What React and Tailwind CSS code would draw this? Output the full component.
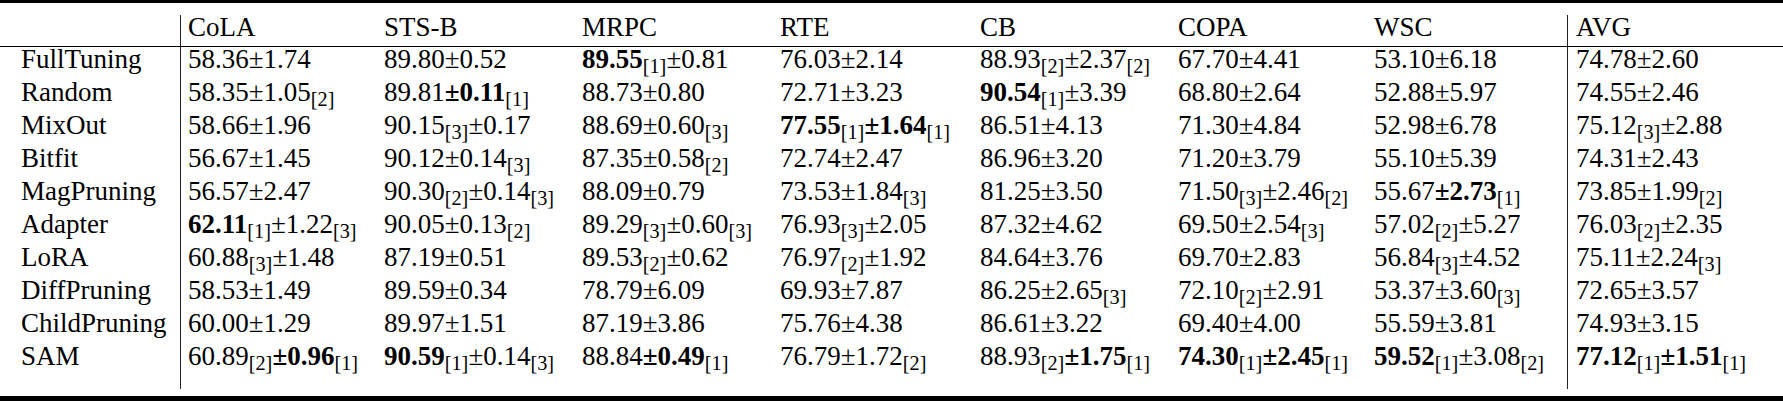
import React from 'react';

// columns: label | CoLA | STS-B | MRPC | RTE | CB | COPA | WSC | AVG
const cols = 'grid grid-cols-[181px_196px_198px_198px_200px_198px_196px_201px_1fr]';

const heads = ['CoLA', 'STS-B', 'MRPC', 'RTE', 'CB', 'COPA', 'WSC', 'AVG'];

// "*" = bold, "[n]" = rank subscript
const rows = [
    ['FullTuning', '58.36±1.74', '89.80±0.52', '*89.55[1]±0.81', '76.03±2.14', '88.93[2]±2.37[2]', '67.70±4.41', '53.10±6.18', '74.78±2.60'],
    ['Random', '58.35±1.05[2]', '89.81±*0.11[1]', '88.73±0.80', '72.71±3.23', '*90.54[1]±3.39', '68.80±2.64', '52.88±5.97', '74.55±2.46'],
    ['MixOut', '58.66±1.96', '90.15[3]±0.17', '88.69±0.60[3]', '*77.55[1]±*1.64[1]', '86.51±4.13', '71.30±4.84', '52.98±6.78', '75.12[3]±2.88'],
    ['Bitfit', '56.67±1.45', '90.12±0.14[3]', '87.35±0.58[2]', '72.74±2.47', '86.96±3.20', '71.20±3.79', '55.10±5.39', '74.31±2.43'],
    ['MagPruning', '56.57±2.47', '90.30[2]±0.14[3]', '88.09±0.79', '73.53±1.84[3]', '81.25±3.50', '71.50[3]±2.46[2]', '55.67±*2.73[1]', '73.85±1.99[2]'],
    ['Adapter', '*62.11[1]±1.22[3]', '90.05±0.13[2]', '89.29[3]±0.60[3]', '76.93[3]±2.05', '87.32±4.62', '69.50±2.54[3]', '57.02[2]±5.27', '76.03[2]±2.35'],
    ['LoRA', '60.88[3]±1.48', '87.19±0.51', '89.53[2]±0.62', '76.97[2]±1.92', '84.64±3.76', '69.70±2.83', '56.84[3]±4.52', '75.11±2.24[3]'],
    ['DiffPruning', '58.53±1.49', '89.59±0.34', '78.79±6.09', '69.93±7.87', '86.25±2.65[3]', '72.10[2]±2.91', '53.37±3.60[3]', '72.65±3.57'],
    ['ChildPruning', '60.00±1.29', '89.97±1.51', '87.19±3.86', '75.76±4.38', '86.61±3.22', '69.40±4.00', '55.59±3.81', '74.93±3.15'],
    ['SAM', '60.89[2]±*0.96[1]', '*90.59[1]±0.14[3]', '88.84±*0.49[1]', '76.79±1.72[2]', '88.93[2]±*1.75[1]', '*74.30[1]±*2.45[1]', '*59.52[1]±3.08[2]', '*77.12[1]±*1.51[1]'],
];

const Part = ({ text }) => {
    const bold = text.startsWith('*');
    const body = bold ? text.slice(1) : text;
    const m = body.match(/^(.*?)(\[\d\])?$/);
    return (
        <>
            <span className={bold ? 'font-bold' : ''}>{m[1]}</span>
            {m[2] && <sub className="font-normal">{m[2]}</sub>}
        </>
    );
};

const Value = ({ text }) => {
    const [mean, std] = text.split('±');
    const stdBold = std.startsWith('*');
    return (
        <>
            <Part text={mean} />
            <span className={stdBold ? 'font-bold' : ''}>±</span>
            <Part text={std} />
        </>
    );
};

const Cell = ({ i, children }) => {
    let cls = 'pl-[7px] whitespace-nowrap';
    if (i === 0) cls = 'pl-[21px] border-r border-[#222] whitespace-nowrap';
    if (i === 7) cls = 'pl-[7px] border-r border-[#222] whitespace-nowrap';
    if (i === 8) cls = 'pl-[8px] whitespace-nowrap';
    return <div className={cls}>{children}</div>;
};

const App = () => {
    return (
        <div className="w-[1783px] h-[401px] bg-white text-black font-['Liberation_Serif','Times_New_Roman',serif] text-[27px] leading-[25px] overflow-hidden">
            <div className="h-[3px] bg-black" />
            <div className="h-[12px]" />

            <div className={`${cols} h-[31px]`}>
                <Cell i={0} />
                {heads.map((h, k) => (
                    <Cell key={h} i={k + 1}>{h}</Cell>
                ))}
            </div>
            <div className="h-px bg-black" />

            {rows.map((r) => (
                <div key={r[0]} className={`${cols} h-[33px]`}>
                    {r.map((c, k) => (
                        <Cell key={k} i={k}>
                            {k === 0 ? c : <Value text={c} />}
                        </Cell>
                    ))}
                </div>
            ))}

            <div className={`${cols} h-[12px]`}>
                {Array.from({ length: 9 }).map((_, k) => (
                    <Cell key={k} i={k} />
                ))}
            </div>
            <div className="h-[7px]" />
            <div className="h-[5px] bg-black" />
        </div>
    );
};

export default App;
